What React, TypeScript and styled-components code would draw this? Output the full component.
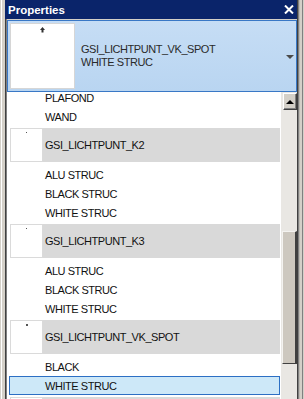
import React from 'react'
import styled, { createGlobalStyle } from 'styled-components'

const GlobalStyle = createGlobalStyle`
  html, body {
    margin: 0;
    padding: 0;
    background: #d4d0c8;
  }
  body {
    font-family: "Liberation Sans", Arial, sans-serif;
  }
`

const Window = styled.div`
  display: flex;
  width: 304px;
  height: 399px;
  overflow: hidden;
  background: #d4d0c8;
`

const LeftFrame = styled.div`
  width: 5px;
  flex: none;
  background: linear-gradient(to right, #d4d0c8 0 1px, #ffffff 1px 2px, #d4d0c8 2px);
`

const RightFrame = styled.div`
  width: 7px;
  flex: none;
  background: linear-gradient(
    to right,
    #404040 0 1px,
    #808080 1px 2px,
    #bdbab3 2px 3px,
    #d4d0c8 3px 5px,
    #808080 5px 6px,
    #d4d0c8 6px
  );
`

const Column = styled.div`
  flex: 1;
  display: flex;
  flex-direction: column;
  min-width: 0;
`

const TitleBar = styled.div`
  height: 19px;
  flex: none;
  display: flex;
  align-items: center;
  justify-content: space-between;
  padding: 0 2px 0 3px;
  background: #0a246a;
  color: #fff;
  font-size: 11.5px;
  font-weight: bold;
`

const CloseGlyph = styled.svg`
  width: 10px;
  height: 9px;
  margin-right: 1px;
`

const Body = styled.div`
  flex: 1;
  display: flex;
  flex-direction: column;
  padding-top: 1px;
  padding-left: 2px;
  box-shadow: inset 1px 0 #404040, inset 2px 0 #808080;
  min-height: 0;
`

const Header = styled.div`
  height: 70px;
  flex: none;
  display: flex;
  align-items: center;
  border: 1px solid #3978c6;
  background: linear-gradient(#c6ddf5, #b9d5f1);
`

const HeaderThumb = styled.div`
  width: 65px;
  height: 66px;
  margin: 2px;
  flex: none;
  display: flex;
  justify-content: center;
  padding-top: 3px;
  box-sizing: border-box;
  background: #fff;
  border: 1px solid #d6d6d6;
`

const HeaderText = styled.div`
  flex: 1;
  padding-left: 4px;
  font-size: 11px;
  letter-spacing: -0.45px;
  line-height: 13px;
  color: #2a2a2a;
`

const DropArrow = styled.div`
  width: 0;
  height: 0;
  margin: 2px 2px 0 0;
  border-left: 4px solid transparent;
  border-right: 4px solid transparent;
  border-top: 4px solid #4a4a4a;
`

const ListArea = styled.div`
  flex: 1;
  display: flex;
  min-height: 0;
`

const ListPane = styled.div`
  flex: 1;
  overflow: hidden;
  background: #fff;
  padding: 0 1px 0 2px;
`

const ListInner = styled.div`
  margin-top: -4px;
`

const Item = styled.div<{ $selected?: boolean }>`
  height: 19px;
  box-sizing: border-box;
  display: flex;
  align-items: center;
  padding-left: 35px;
  font-size: 11px;
  letter-spacing: -0.45px;
  color: #111;
  background: ${p => (p.$selected ? '#cde8f8' : 'transparent')};
  border: 1px solid ${p => (p.$selected ? '#2c6fc4' : 'transparent')};
`

const Group = styled.div`
  height: 34px;
  margin: 2px 0 3px 1px;
  display: flex;
  align-items: center;
  background: #d9d9d9;
  font-size: 11px;
  letter-spacing: -0.45px;
  color: #111;
`

const GroupThumb = styled.div`
  width: 33px;
  height: 34px;
  box-sizing: border-box;
  flex: none;
  display: flex;
  justify-content: center;
  padding-top: 3px;
  background: #fff;
  border: 1px solid #dadada;
  margin-right: 2px;
`

const Dot = styled.div<{ $size: number }>`
  width: ${p => p.$size}px;
  height: ${p => p.$size}px;
  background: #555;
`

const ScrollBar = styled.div`
  width: 16px;
  flex: none;
  display: flex;
  flex-direction: column;
  background: #e9e7e3;
`

const UpButton = styled.div`
  height: 17px;
  width: 14px;
  margin: 1px 0 0 2px;
  box-sizing: border-box;
  display: flex;
  align-items: center;
  justify-content: center;
  background: #d4d0c8;
  border-top: 1px solid #fff;
  border-left: 1px solid #fff;
  border-right: 1px solid #404040;
  border-bottom: 1px solid #404040;
  box-shadow: inset -1px -1px #808080;
  flex: none;
`

const UpArrow = styled.div`
  width: 0;
  height: 0;
  border-left: 4px solid transparent;
  border-right: 4px solid transparent;
  border-bottom: 4px solid #000;
`

const TrackGap = styled.div<{ $h: number }>`
  height: ${p => p.$h}px;
  flex: none;
`

const Thumb = styled.div`
  height: 133px;
  flex: none;
  margin-left: 1px;
  box-sizing: border-box;
  background: #cdc8bf;
  border-top: 1px solid #f4f3f0;
  border-left: 1px solid #f4f3f0;
  border-right: 2px solid #404040;
  border-bottom: 1px solid #404040;
`

type Entry =
  | { kind: 'item'; label: string; selected?: boolean }
  | { kind: 'group'; label: string; dot: number }

const entries: Entry[] = [
  { kind: 'item', label: 'PLAFOND' },
  { kind: 'item', label: 'WAND' },
  { kind: 'group', label: 'GSI_LICHTPUNT_K2', dot: 1 },
  { kind: 'item', label: 'ALU STRUC' },
  { kind: 'item', label: 'BLACK STRUC' },
  { kind: 'item', label: 'WHITE STRUC' },
  { kind: 'group', label: 'GSI_LICHTPUNT_K3', dot: 1 },
  { kind: 'item', label: 'ALU STRUC' },
  { kind: 'item', label: 'BLACK STRUC' },
  { kind: 'item', label: 'WHITE STRUC' },
  { kind: 'group', label: 'GSI_LICHTPUNT_VK_SPOT', dot: 2 },
  { kind: 'item', label: 'BLACK' },
  { kind: 'item', label: 'WHITE STRUC', selected: true },
  { kind: 'group', label: '', dot: 1 },
]

export default function App() {
  return (
    <>
      <GlobalStyle />
      <Window>
        <LeftFrame />
        <Column>
          <TitleBar>
            <span>Properties</span>
            <CloseGlyph viewBox="0 0 10 9">
              <path d="M1 0.5L9 8.5M9 0.5L1 8.5" stroke="#fff" strokeWidth="2" />
            </CloseGlyph>
          </TitleBar>
          <Body>
            <Header>
              <HeaderThumb>
                <svg width="7" height="6" viewBox="0 0 7 6">
                  <path d="M3.5 0L6 3H4.5V5.5H2.5V3H1Z" fill="#333" />
                </svg>
              </HeaderThumb>
              <HeaderText>
                GSI_LICHTPUNT_VK_SPOT
                <br />
                WHITE STRUC
              </HeaderText>
              <DropArrow />
            </Header>
            <ListArea>
              <ListPane>
                <ListInner>
                  {entries.map((e, i) =>
                    e.kind === 'item' ? (
                      <Item key={i} $selected={e.selected}>
                        {e.label}
                      </Item>
                    ) : (
                      <Group key={i}>
                        <GroupThumb>
                          <Dot $size={e.dot} />
                        </GroupThumb>
                        {e.label}
                      </Group>
                    )
                  )}
                </ListInner>
              </ListPane>
              <ScrollBar>
                <UpButton>
                  <UpArrow />
                </UpButton>
                <TrackGap $h={121} />
                <Thumb />
              </ScrollBar>
            </ListArea>
          </Body>
        </Column>
        <RightFrame />
      </Window>
    </>
  )
}
